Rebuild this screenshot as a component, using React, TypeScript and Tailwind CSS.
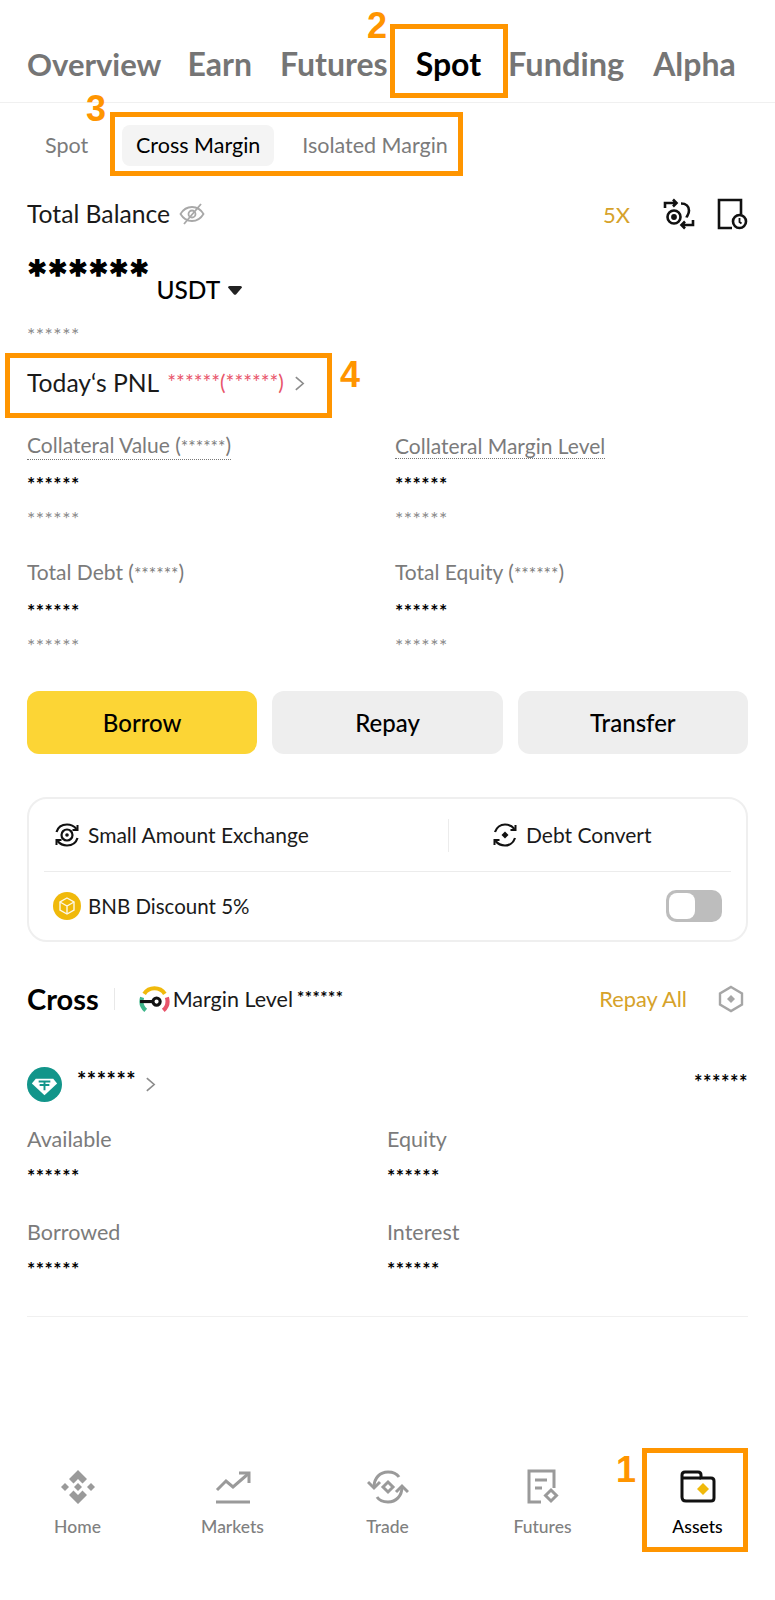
const font = "[font-family:Lato,'Liberation_Sans',sans-serif]"

function Stars({ className = '' }: { className?: string }) {
  return <span className={`block h-[18px] leading-none tracking-[0.5px] ${className}`}>******</span>
}

function Mark({ box, n, num }: { box: string; n: string; num: string }) {
  return (
    <>
      <div className={`absolute border-[5px] border-[#ff9500] ${box}`} />
      <span className={`absolute font-bold text-[#ff9500] text-[36px] leading-none [font-family:'Liberation_Sans',sans-serif] ${num}`}>{n}</span>
    </>
  )
}

function Chevron({ className = '' }: { className?: string }) {
  return (
    <svg viewBox="0 0 12 18" className={className} fill="none" stroke="#8c8c8c" strokeWidth="1.8">
      <path d="M2 2l8 7-8 7" />
    </svg>
  )
}

function StatCell({ label, hidden, dotted }: { label: string; hidden?: boolean; dotted?: boolean }) {
  return (
    <div className="flex flex-col h-[127px]">
      <div className="h-[32px] flex items-center">
        <span className={`text-[21px] text-[#7b7b7b] leading-[24px] ${dotted ? 'border-b border-dotted border-[#777]' : ''}`}>
          {label}
          {hidden && <> (<span className="text-[17.500px]">******</span>)</>}
        </span>
      </div>
      <div className="h-[36px] pt-[12px] text-[19.500px] text-black font-bold"><Stars /></div>
      <div className="h-[36px] pt-[11px] text-[19.500px] text-[#8a8a8a]"><Stars /></div>
    </div>
  )
}

function AssetCell({ label }: { label: string }) {
  return (
    <div className="flex flex-col">
      <span className="text-[21.500px] leading-[26px] text-[#7b7b7b]">{label}</span>
      <span className="mt-[14px] text-[19.500px] font-bold text-black"><Stars /></span>
    </div>
  )
}

function NavItem({ label, active, children }: { label: string; active?: boolean; children: React.ReactNode }) {
  return (
    <div className="flex flex-col items-center w-[155px]">
      <div className="h-[38px] flex items-center justify-center">{children}</div>
      <span className={`mt-[11px] text-[17.500px] leading-[20px] font-medium ${active ? 'text-black' : 'text-[#808080]'}`}>{label}</span>
    </div>
  )
}

export default function App() {
  return (
    <div className={`relative w-[775px] h-[1600px] bg-white overflow-hidden ${font}`}>
      {/* top tabs */}
      <div className="h-[103px] border-b border-[#f0f0f0] flex items-end pb-[18px] pl-[27px] text-[32px] leading-[40px] font-bold text-[#757575] whitespace-nowrap">
        <span className="text-[31px]">Overview</span>
        <span className="ml-[26px]">Earn</span>
        <span className="ml-[28px]">Futures</span>
        <span className="ml-[28px] text-black">Spot</span>
        <span className="ml-[27px] text-[32.500px]">Funding</span>
        <span className="ml-[29px]">Alpha</span>
      </div>

      {/* sub tabs */}
      <div className="mt-[22px] h-[41px] flex items-center pl-[45px] text-[21.500px] text-[#7b7b7b]">
        <span>Spot</span>
        <span className="ml-[34px] h-[41px] w-[152px] rounded-[8px] bg-[#f4f4f4] flex items-center justify-center text-black">Cross Margin</span>
        <span className="ml-[28px]">Isolated Margin</span>
      </div>

      {/* balance */}
      <div className="mt-[33px] mx-[27px] h-[30px] flex items-center">
        <span className="text-[24.700px] text-[#1a1a1a]">Total Balance</span>
        <svg viewBox="0 0 26 24" className="ml-[9px] w-[26px] h-[24px]" fill="none" stroke="#a8a8a8" strokeWidth="1.8">
          <path d="M1.5 12c3-5 7-7 11.500-7s8.500 2 11.500 7c-3 5-7 7-11.500 7s-8.500-2-11.500-7z" />
          <circle cx="13" cy="12" r="3.500" />
          <path d="M22 2L5 22" />
        </svg>
        <span className="ml-auto text-[22px] text-[#d6a22a]">5X</span>
        <svg viewBox="0 0 32 32" className="ml-[33px] w-[32px] h-[32px]" fill="none" stroke="#111" strokeWidth="2.600">
          <circle cx="11" cy="19" r="6.500" />
          <circle cx="11" cy="19" r="1.600" fill="#111" />
          <path d="M2 10V5h11M10 1.500L13.500 5 10 8.500" />
          <path d="M30 22v5H19M22 23.500L18.500 27l3.500 3.500" />
          <path d="M18 5.500c5 0 8 3 8 7s-2 5-2.500 7" />
        </svg>
        <svg viewBox="0 0 32 32" className="ml-[21px] w-[32px] h-[32px]" fill="none" stroke="#111" strokeWidth="2.600">
          <path d="M16 30H3V2h22v14" />
          <circle cx="23.500" cy="23.500" r="6.500" />
          <path d="M23.500 20v4l2 1.500" strokeWidth="1.800" />
        </svg>
      </div>

      <div className="mt-[24px] ml-[27px] h-[56px] flex">
        <span className="text-[48px] leading-[50px] font-bold text-black [-webkit-text-stroke:1.5px_black]">******</span>
        <span className="ml-[7px] mt-[22px] text-[24.500px] leading-[30px] font-medium text-black">USDT</span>
        <svg viewBox="0 0 14 9" className="ml-[8px] mt-[33px] w-[14px] h-[9px]"><path d="M0 1.500Q0 0 1.500 0h11Q14 0 14 1.500L8 8.500Q7 9 6 8.500z" fill="#222" /></svg>
      </div>

      <div className="mt-[16px] ml-[27px] h-[20px] text-[19.500px] text-[#8a8a8a]"><Stars /></div>

      <div className="mt-[23px] ml-[27px] h-[30px] flex items-center">
        <span className="text-[24.700px] text-[#1a1a1a]">Today‘s PNL</span>
        <span className="ml-[8px] text-[20.700px] text-[#e8546a] whitespace-nowrap">******(******)</span>
        <Chevron className="ml-[10px] w-[11px] h-[17px]" />
      </div>

      {/* stats */}
      <div className="mt-[32px] ml-[27px] grid grid-cols-[368px_1fr]">
        <StatCell label="Collateral Value" hidden dotted />
        <StatCell label="Collateral Margin Level" dotted />
        <StatCell label="Total Debt" hidden />
        <StatCell label="Total Equity" hidden />
      </div>

      {/* actions */}
      <div className="mt-[7px] mx-[27px] h-[63px] grid grid-cols-3 gap-[15px] text-[24px] font-medium text-black">
        <button className="rounded-[12px] bg-[#fcd535]">Borrow</button>
        <button className="rounded-[12px] bg-[#eeeeee]">Repay</button>
        <button className="rounded-[12px] bg-[#eeeeee]">Transfer</button>
      </div>

      {/* tools card */}
      <div className="mt-[43px] mx-[27px] h-[145px] rounded-[20px] border-2 border-[#efefef] px-[15px]">
        <div className="h-[73px] border-b border-[#ececec] flex items-center text-[21px] text-[#1a1a1a]">
          <div className="w-[404px] flex items-center pl-[10px]">
            <svg viewBox="0 0 26 26" className="w-[26px] h-[26px] mr-[8px]" fill="none" stroke="#111" strokeWidth="2.200">
              <circle cx="13" cy="13" r="5.500" />
              <circle cx="13" cy="13" r="1.800" fill="#111" stroke="none" />
              <path d="M2.500 10C4 5 8 2.500 13 2.500c4 0 7 1.500 9.500 4.500M23.500 16c-1.500 5-5.500 7.500-10.500 7.500-4 0-7-1.500-9.500-4.500" />
              <path d="M23.500 3v5h-5M2.500 23v-5h5" strokeWidth="2" />
            </svg>
            Small Amount Exchange
          </div>
          <div className="w-px h-[33px] bg-[#ececec]" />
          <div className="flex items-center ml-[43px]">
            <svg viewBox="0 0 26 26" className="w-[26px] h-[26px] mr-[8px]" fill="none" stroke="#111" strokeWidth="2.200">
              <path d="M3 10C4.500 5.500 8.500 2.500 13 2.500c4 0 7 1.500 9.500 4.500M23 16c-1.500 4.500-5.500 7.500-10 7.500-4 0-7-1.500-9.500-4.500" />
              <path d="M23.500 3v5h-5M2.500 23v-5h5" strokeWidth="2" />
              <path d="M13 9.500l3.500 3.500-3.500 3.500L9.500 13z" fill="#111" stroke="none" />
            </svg>
            Debt Convert
          </div>
        </div>
        <div className="h-[68px] flex items-center text-[20.500px] text-[#1a1a1a]">
          <svg viewBox="0 0 28 28" className="ml-[9px] mr-[7px] w-[28px] h-[28px]">
            <circle cx="14" cy="14" r="14" fill="#f0b90b" />
            <g fill="none" stroke="#fff" strokeWidth="1.400" opacity="0.9">
              <path d="M14 6l7 4v8l-7 4-7-4v-8z" />
              <path d="M7 10l7 4 7-4M14 14v8" />
            </g>
          </svg>
          BNB Discount 5%
          <div className="ml-auto mr-[9px] w-[56px] h-[32px] rounded-[10px] bg-[#bdbdbd] flex items-center pl-[3px]">
            <div className="w-[26px] h-[26px] rounded-[8px] bg-white" />
          </div>
        </div>
      </div>

      {/* cross */}
      <div className="mt-[41px] mx-[27px] h-[32px] flex items-center">
        <span className="text-[29px] font-bold text-black">Cross</span>
        <div className="ml-[15px] w-px h-[22px] bg-[#e8e8e8]" />
        <svg viewBox="0 0 30 26" className="ml-[24px] w-[31px] h-[27px]" fill="none" strokeWidth="4">
          <path d="M6.500 23.500A12 12 0 0 1 3 11" stroke="#3fb68b" />
          <path d="M5 7.500a12 12 0 0 1 20 0" stroke="#f0b90b" />
          <path d="M27 11a12 12 0 0 1 -3.500 12.500" stroke="#e8546a" />
          <circle cx="17" cy="15" r="3.500" stroke="#111" strokeWidth="3" />
          <path d="M1 15h12" stroke="#111" strokeWidth="3" />
        </svg>
        <span className="ml-[3px] text-[21.500px] text-[#1a1a1a]">Margin Level</span>
        <span className="ml-[4px] -mt-[3px] text-[17px] font-bold text-black"><Stars /></span>
        <span className="ml-auto text-[21.800px] text-[#d6a22a]">Repay All</span>
        <svg viewBox="0 0 26 28" className="ml-[31px] mr-[4px] w-[26px] h-[28px]" fill="none" stroke="#a6a6a6" strokeWidth="2.400">
          <path d="M13 2l11 6.500v11L13 26 2 19.500v-11z" />
          <path d="M13 10l4 4-4 4-4-4z" fill="#a6a6a6" stroke="none" />
        </svg>
      </div>

      {/* asset */}
      <div className="mt-[51px] mx-[27px] h-[36px] flex items-center">
        <svg viewBox="0 0 36 36" className="w-[35px] h-[35px]">
          <circle cx="18" cy="18" r="18" fill="#12958a" />
          <path d="M9 12h18l4 5-13 12L5 17z" fill="#fff" />
          <path d="M12 15h12M18 15v9M13 18.500h10" stroke="#12958a" strokeWidth="2" />
        </svg>
        <span className="ml-[15px] -mt-[8px] text-[22px] font-bold text-black"><Stars className="h-[23px]" /></span>
        <Chevron className="ml-[9px] w-[11px] h-[17px]" />
        <span className="ml-auto -mt-[6px] text-[20px] font-bold text-black"><Stars /></span>
      </div>

      <div className="mt-[24px] ml-[27px] grid grid-cols-[360px_1fr] gap-y-[35px]">
        <AssetCell label="Available" />
        <AssetCell label="Equity" />
        <AssetCell label="Borrowed" />
        <AssetCell label="Interest" />
      </div>

      <div className="mt-[39px] mx-[27px] h-px bg-[#f0f0f0]" />

      {/* bottom nav */}
      <div className="mt-[151px] flex">
        <NavItem label="Home">
          <svg viewBox="0 0 36 36" className="w-[36px] h-[36px]" fill="#9a9a9a">
            <path d="M18 1l9 9-4.500 4.500L18 10l-4.500 4.500L9 10zM18 35l-9-9 4.500-4.500L18 26l4.500-4.500L27 26zM18 14l4 4-4 4-4-4zM5 14l4 4-4 4-4-4zM31 14l4 4-4 4-4-4z" />
          </svg>
        </NavItem>
        <NavItem label="Markets">
          <svg viewBox="0 0 36 36" className="w-[36px] h-[36px]" fill="none" stroke="#9a9a9a" strokeWidth="3">
            <path d="M2 21l9-9 7 6L33 5" />
            <path d="M24 4h10v10" />
            <path d="M1 33h34" />
          </svg>
        </NavItem>
        <NavItem label="Trade">
          <svg viewBox="0 0 42 36" className="w-[42px] h-[36px]" fill="none" stroke="#9a9a9a" strokeWidth="3">
            <path d="M7 18c0-9 6-15 14-15 5 0 9 2 11 5" />
            <path d="M35 18c0 9-6 15-14 15-5 0-9-2-11-5" />
            <path d="M1 13l6 6 6-6M29 23l6-6 6 6" />
            <path d="M21 13l5 5-5 5-5-5z" />
          </svg>
        </NavItem>
        <NavItem label="Futures">
          <svg viewBox="0 0 32 36" className="w-[32px] h-[36px]" fill="none" stroke="#9a9a9a" strokeWidth="3">
            <path d="M14 33H2V2h25v17" />
            <path d="M8 11h12M8 19h7" />
            <path d="M24 21l5.500 5.500L24 32l-5.500-5.500z" />
          </svg>
        </NavItem>
        <NavItem label="Assets" active>
          <svg viewBox="0 0 36 36" className="w-[36px] h-[36px]" fill="none">
            <path d="M2 28V6q0-3 3-3h13q3 0 3 3v3h10q3 0 3 3v17q0 3-3 3H6q-4 0-4-4z" stroke="#111" strokeWidth="3" />
            <path d="M2 9h19" stroke="#111" strokeWidth="3" />
            <path d="M23 14l6 6-6 6-6-6z" fill="#f0b90b" />
          </svg>
        </NavItem>
      </div>

      {/* orange annotations */}
      <Mark n="1" box="left-[642px] top-[1448px] w-[106px] h-[104px]" num="left-[616px] top-[1452px]" />
      <Mark n="2" box="left-[390px] top-[24px] w-[118px] h-[74px]" num="left-[367px] top-[8px]" />
      <Mark n="3" box="left-[110px] top-[112px] w-[353px] h-[64px]" num="left-[86px] top-[91px]" />
      <Mark n="4" box="left-[5px] top-[353px] w-[327px] h-[65px]" num="left-[340px] top-[357px]" />
    </div>
  )
}
